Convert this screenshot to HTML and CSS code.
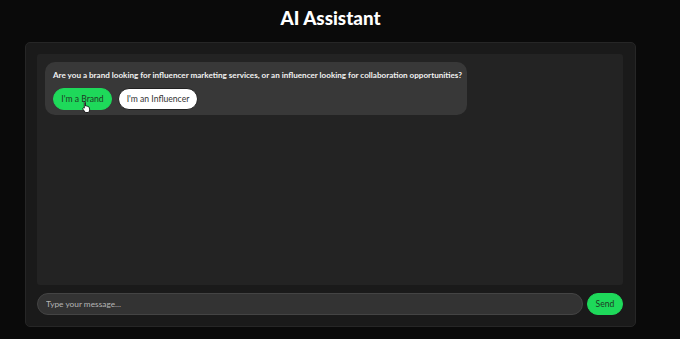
FILE: index.html
```html
<!DOCTYPE html>
<html>
<head>
<meta charset="utf-8">
<link rel="stylesheet" href="styles.css">
</head>
<body>
<div class="page">
<h1 class="title">AI Assistant</h1>
<div class="panel">
  <div class="chat">
    <div class="bubble">
      <p class="msg">Are you a brand looking for influencer marketing services, or an influencer looking for collaboration opportunities?</p>
      <div class="choices">
        <button class="btn btn-green">I'm a Brand
          <svg class="cursor" width="9" height="12" viewBox="0 0 9 12"><path d="M2.5 0.5c.6 0 1 .4 1 1V5l.2-.1c.5-.2 1 0 1.2.4.4-.2.9 0 1.1.4.4-.2 1 .1 1.1.6L7.6 8c.2 1.3-.4 2.7-1.3 3.5H3.4L1 8.3c-.4-.5-.3-1.1.2-1.4.4-.2.8-.1 1.1.2V1.5c0-.6.2-1 .2-1z" fill="#fff" stroke="#000" stroke-width="0.8"/></svg>
        </button>
        <button class="btn btn-white">I'm an Influencer</button>
      </div>
    </div>
  </div>
  <div class="composer">
    <input class="input" type="text" placeholder="Type your message...">
    <button class="btn btn-green send">Send</button>
  </div>
</div>
</div>
</body>
</html>
```
FILE: styles.css
```css
html, body {
  margin: 0;
  padding: 0;
  background: #0a0a0a;
  font-family: "Lato", "Open Sans", sans-serif;
  color: #fff;
}
.page {
  margin: 0 44px 0 25px;
}
.title {
  margin: 0;
  padding-top: 5px;
  height: 37px;
  text-align: center;
  font-size: 18.8px;
  font-weight: 900;
  line-height: 26px;
}
.panel {
  height: 285px;
  box-sizing: border-box;
  background: #1a1a1a;
  border: 1px solid #262626;
  border-radius: 5px;
  padding: 11px 12px 11px 11px;
  display: flex;
  flex-direction: column;
  gap: 8px;
}
.chat {
  flex: 1;
  background: #232323;
  border-radius: 3px;
  padding: 8px;
}
.bubble {
  width: 422px;
  box-sizing: border-box;
  background: #383838;
  border-radius: 10px;
  padding: 7px 8px 5px 8px;
}
.msg {
  margin: 0;
  font-size: 8.1px;
  line-height: 12px;
  font-weight: 700;
  color: #f2f2f2;
  white-space: nowrap;
}
.choices {
  display: flex;
  gap: 6px;
  margin-top: 7px;
}
.btn {
  font-family: inherit;
  font-size: 8.6px;
  height: 22px;
  border-radius: 11px;
  padding: 0;
  cursor: pointer;
  position: relative;
  white-space: nowrap;
  color: #222;
}
.btn-green {
  background: #1ed95a;
  border: 1px solid #1ed95a;
  color: #1f3a25;
  width: 59px;
}
.btn-white {
  background: #fff;
  border: 1.5px solid #222;
  width: 80px;
  color: #333;
}
.cursor {
  position: absolute;
  left: 28px;
  top: 12px;
}
.composer {
  display: flex;
  gap: 4px;
  align-items: center;
}
.input {
  flex: 1;
  height: 22px;
  box-sizing: border-box;
  background: #333;
  border: 1px solid #444;
  border-radius: 11px;
  padding: 0 8px;
  font-family: inherit;
  font-size: 8.3px;
  color: #ddd;
  outline: none;
}
.input::placeholder {
  color: #b5b5b5;
}
.send {
  width: 36px;
}
```
